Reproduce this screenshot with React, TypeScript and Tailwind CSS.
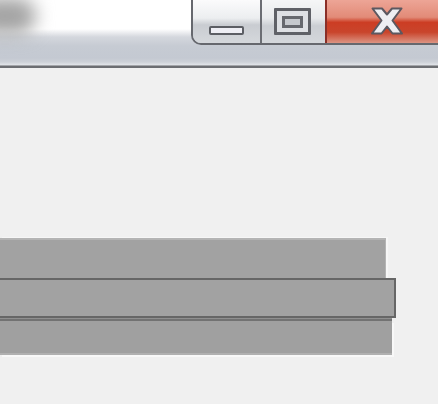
export default function App() {
  return (
    <div className="w-[438px] h-[404px] overflow-hidden bg-[#f0f0f0]">
      <div className="relative h-[65px] overflow-hidden bg-[linear-gradient(to_bottom,#ffffff_0px,#ffffff_29px,#d4d7dd_37px,#c6cbd3_46px,#c4c9d2_58px,#cdd1d8_62px,#e2e5e9_65px)]">
        <div className="absolute left-[-26px] top-[-2px] h-[36px] w-[62px] rounded-full bg-[#a4a4a4] blur-[9px]" />
        <div className="relative ml-[191px] flex h-[45px] overflow-hidden rounded-bl-[10px] border-b-2 border-l-2 border-[#66686e] blur-[0.4px]">
          <div className="flex w-[69px] items-end justify-center border-r-2 border-[#6b6d73] bg-[linear-gradient(to_bottom,#fbfbfc_0%,#eceef0_42%,#c9ccd1_58%,#d5d8dc_100%)] pb-[8px]">
            <div className="-ml-[1px] h-[9px] w-[35px] rounded-[2px] border-2 border-[#5c5e64] bg-[#eeeef4]" />
          </div>
          <div className="flex w-[65px] items-start justify-center border-r-2 border-[#8a2f28] bg-[linear-gradient(to_bottom,#f5f6f7_0%,#e8eaec_42%,#cbced3_60%,#d4d7db_100%)] pt-[8px]">
            <div className="-ml-[2px] flex h-[27px] w-[37px] items-center justify-center rounded-[1px] border-[3px] border-[#5f6167] bg-[#dee0e4]">
              <div className="h-[12px] w-[21px] border-[3px] border-[#66686e] bg-[#c6c9ce]" />
            </div>
          </div>
          <div className="flex flex-1 items-center justify-center bg-[linear-gradient(to_bottom,#eda596_0%,#e28b78_40%,#cc3d24_52%,#c9452c_75%,#dc9483_100%)] pb-[1px]">
            <svg width="34" height="28" viewBox="0 0 34 28" className="ml-[8px]">
              <path
                d="M2.5 1.5 H12 L17 7.5 L22 1.5 H31.5 L22.5 13.5 L32 26.5 H22.5 L17 19.5 L11.5 26.5 H2 L11.5 13.5 Z"
                fill="#eeeef2"
                stroke="#5c5860"
                strokeWidth="2"
                strokeLinejoin="round"
              />
            </svg>
          </div>
        </div>
      </div>
      <div className="h-[1px] bg-[#a4a6aa]" />
      <div className="h-[2px] bg-[#6c6e72]" />
      <div className="flex flex-col items-start pt-[170px]">
        <div className="h-[41px] w-[386px] border-r border-t-2 border-[#b4b4b4] bg-[#a2a2a2] shadow-[2px_-1px_0_#f6f6f6]" />
        <div className="-mt-px h-[40px] w-[396px] border-2 border-l-0 border-[#666666] bg-[#a2a2a2]" />
        <div className="h-[1px] w-[392px] bg-[#8f8f8f]" />
        <div className="h-[2px] w-[392px] bg-[#727272]" />
        <div className="h-[34px] w-[392px] border-b-2 border-[#b0b0b0] bg-[#a0a0a0] shadow-[2px_2px_0_#f8f8f8]" />
      </div>
    </div>
  )
}
